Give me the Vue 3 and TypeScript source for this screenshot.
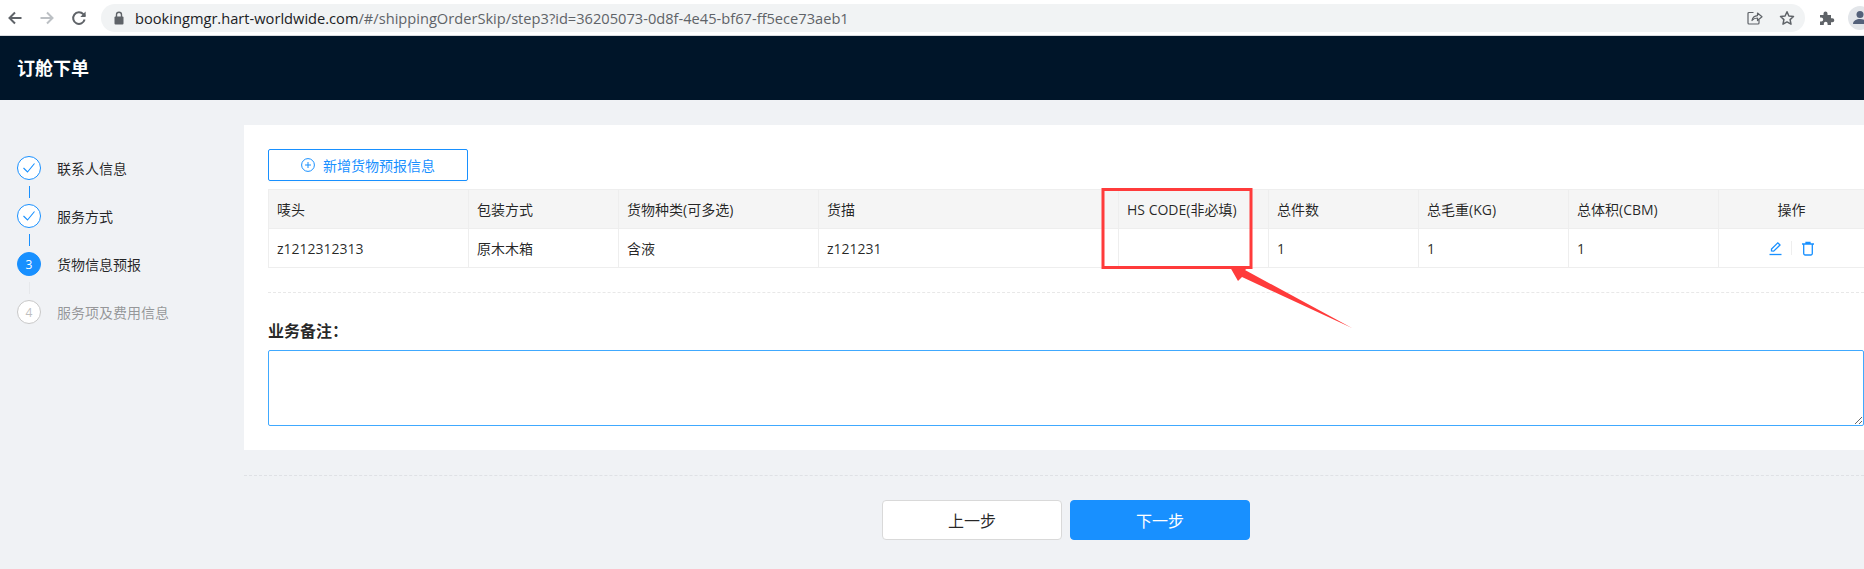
<script setup lang="ts">
interface Step { label: string; state: 'done' | 'active' | 'todo'; num: number }
const steps: Step[] = [
  { label: '联系人信息', state: 'done', num: 1 },
  { label: '服务方式', state: 'done', num: 2 },
  { label: '货物信息预报', state: 'active', num: 3 },
  { label: '服务项及费用信息', state: 'todo', num: 4 },
]
const columns: { title: string; width: number }[] = [
  { title: '唛头', width: 200 },
  { title: '包装方式', width: 150 },
  { title: '货物种类(可多选)', width: 200 },
  { title: '货描', width: 300 },
  { title: 'HS CODE(非必填)', width: 150 },
  { title: '总件数', width: 150 },
  { title: '总毛重(KG)', width: 150 },
  { title: '总体积(CBM)', width: 150 },
  { title: '操作', width: 146 },
]
const row = ['z1212312313', '原木木箱', '含液', 'z121231', '', '1', '1', '1']
</script>

<template>
  <div class="page">
    <div class="chrome">
      <svg class="nav" width="16" height="16" viewBox="0 0 16 16"><path d="M14.5 8H2.500M8 2.500L2.500 8L8 13.500" fill="none" stroke="#5f6368" stroke-width="2"/></svg>
      <svg class="nav" width="16" height="16" viewBox="0 0 16 16"><path d="M1.500 8H13.500M8 2.500L13.500 8L8 13.500" fill="none" stroke="#bcc0c4" stroke-width="2"/></svg>
      <svg class="nav" width="16" height="16" viewBox="0 0 16 16"><path d="M13.600 9.500A5.800 5.800 0 1 1 12.300 4.200L14 6" fill="none" stroke="#5f6368" stroke-width="2"/><path d="M14.600 1.600V6.900H9.300Z" fill="#5f6368"/></svg>
      <div class="omnibox">
        <svg class="lock" width="12" height="14" viewBox="0 0 12 14"><rect x="1.500" y="5.500" width="9" height="8" rx="1" fill="#5f6368"/><path d="M3.500 6V3.800a2.500 2.500 0 0 1 5 0V6" fill="none" stroke="#5f6368" stroke-width="1.400"/></svg>
        <span class="url"><b>bookingmgr.hart-worldwide.com</b>/#/shippingOrderSkip/step3?id=36205073-0d8f-4e45-bf67-ff5ece73aeb1</span>
        <svg class="share" width="16" height="16" viewBox="0 0 16 16"><path d="M6.500 2.500H2a1 1 0 0 0-1 1V13a1 1 0 0 0 1 1h9a1 1 0 0 0 1-1V10" fill="none" stroke="#5f6368" stroke-width="1.200"/><path d="M5 10.500C5.500 7.500 7.500 5.800 10.500 5.600V3L15 6.800L10.500 10.500V8C8 8 6.300 8.800 5 10.500Z" fill="none" stroke="#5f6368" stroke-width="1.200" stroke-linejoin="round"/></svg>
        <svg class="star" width="16" height="16" viewBox="0 0 16 16"><path d="M8 1.800L9.900 6L14.500 6.500L11.100 9.600L12 14.200L8 11.900L4 14.200L4.900 9.600L1.500 6.500L6.100 6Z" fill="none" stroke="#5f6368" stroke-width="1.500" stroke-linejoin="round"/></svg>
      </div>
      <svg class="puzzle" width="16" height="16" viewBox="0 0 16 16"><path d="M1 5H4.500V3.500a2 2 0 0 1 4 0V5H12V8.300h1.300a2 2 0 0 1 0 4H12V15H8.600V13.700a1.900 1.900 0 0 0-3.800 0V15H1V11.500H2.200a2 2 0 0 0 0-4H1Z" fill="#5f6368"/></svg>
      <div class="avatar">
        <svg width="20" height="20" viewBox="0 0 20 20"><circle cx="10" cy="6.500" r="3.500" fill="#54617a"/><path d="M3 16c0-3.500 3.500-5 7-5s7 1.500 7 5Z" fill="#54617a"/></svg>
      </div>
    </div>

    <header class="topbar">订舱下单</header>

    <div class="main">
      <nav class="steps">
        <template v-for="(s, i) in steps" :key="s.num">
          <div class="step" :class="s.state">
            <span class="dot">
              <svg v-if="s.state === 'done'" width="14" height="12" viewBox="0 0 14 12"><path d="M1.500 6L5.500 10L12.500 1.500" fill="none" stroke="#1890ff" stroke-width="1.100"/></svg>
              <template v-else>{{ s.num }}</template>
            </span>
            <span class="step-label">{{ s.label }}</span>
          </div>
          <div v-if="i < steps.length - 1" class="connector" :class="{ muted: s.state === 'active' }"><i></i></div>
        </template>
      </nav>

      <div class="content">
        <section class="card">
          <button class="add-btn" type="button">
            <svg width="14" height="14" viewBox="0 0 14 14"><circle cx="7" cy="7" r="6.400" fill="none" stroke="#1890ff" stroke-width="1"/><path d="M7 4V10M4 7H10" stroke="#1890ff" stroke-width="1"/></svg>
            <span>新增货物预报信息</span>
          </button>
          <table class="grid">
            <colgroup><col v-for="c in columns" :key="c.title" :style="{ width: c.width + 'px' }" /></colgroup>
            <thead>
              <tr><th v-for="(c, i) in columns" :key="c.title" :class="{ center: i === 8 }">{{ c.title }}</th></tr>
            </thead>
            <tbody>
              <tr>
                <td v-for="(v, i) in row" :key="i">{{ v }}</td>
                <td class="ops">
                  <svg width="15" height="15" viewBox="0 0 15 15"><path d="M3.500 10L3.500 8L9.800 1.800L12 4L5.700 10.200Z" fill="none" stroke="#1890ff" stroke-width="1.300"/><path d="M1.500 13.500H13.500" stroke="#1890ff" stroke-width="1.300"/></svg>
                  <i class="sep"></i>
                  <svg width="14" height="15" viewBox="0 0 14 15"><path d="M1 3H13M5 3V1.500H9V3M2.700 3V12.500A1.500 1.500 0 0 0 4.200 14H9.800A1.500 1.500 0 0 0 11.300 12.500V3" fill="none" stroke="#1890ff" stroke-width="1.300"/></svg>
                </td>
              </tr>
            </tbody>
          </table>
          <div class="dash"></div>
          <div class="remark-title">业务备注：</div>
          <textarea class="remark"></textarea>
        </section>
        <div class="bottom-dash"></div>
        <div class="actions">
          <button class="btn prev" type="button">上一步</button>
          <button class="btn next" type="button">下一步</button>
        </div>
      </div>
    </div>

    <svg class="annotation" width="1864" height="569" viewBox="0 0 1864 569">
      <polygon points="1230,267 1249,267 1245,270 1352,328 1242,277 1238,281" fill="#ff3b3b"/>
      <rect x="1103" y="189.500" width="148" height="78" fill="none" stroke="#ff3b3b" stroke-width="3"/>
    </svg>
  </div>
</template>

<style>
html, body { margin: 0; background: #f0f2f5; }
</style>

<style scoped>
.page {
  position: relative;
  width: 1864px;
  height: 569px;
  overflow: hidden;
  background: #f0f2f5;
  font-family: "Open Sans", "Noto Sans CJK SC", sans-serif;
  font-size: 14px;
  color: rgba(0, 0, 0, 0.85);
}
.chrome {
  display: flex;
  align-items: center;
  height: 35px;
  box-sizing: content-box;
  background: #fff;
  border-bottom: 1px solid #dadce0;
  padding-left: 7px;
}
.nav { flex: none; margin-right: 16px; }
.omnibox {
  flex: none;
  display: flex;
  align-items: center;
  width: 1704px;
  height: 28px;
  margin-left: -2px;
  border-radius: 14px;
  background: #f1f3f4;
  box-sizing: border-box;
  padding-left: 12px;
}
.lock { flex: none; }
.url {
  margin-left: 10px;
  font-family: "Open Sans", sans-serif;
  font-size: 14.650px;
  color: #5f6368;
  white-space: nowrap;
}
.url b { font-weight: 400; color: #202124; }
.share { margin-left: auto; }
.star { margin-left: 16px; margin-right: 10px; }
.puzzle { flex: none; margin-left: 14px; }
.avatar {
  flex: none;
  width: 24px;
  height: 24px;
  margin-left: 13px;
  border-radius: 50%;
  background: #e3e6ea;
  display: flex;
  align-items: center;
  justify-content: center;
}
.topbar {
  height: 64px;
  line-height: 64px;
  padding-left: 17px;
  background: #001529;
  color: #fff;
  font-size: 18px;
  font-weight: 700;
}
.main { display: flex; }
.steps {
  flex: none;
  width: 244px;
  box-sizing: border-box;
  padding: 56px 0 0 17px;
}
.step { display: flex; align-items: center; gap: 16px; height: 24px; }
.dot {
  flex: none;
  width: 24px;
  height: 24px;
  box-sizing: border-box;
  border: 1px solid #1890ff;
  border-radius: 50%;
  display: flex;
  align-items: center;
  justify-content: center;
  background: #fff;
  font-size: 12px;
}
.step.active .dot { background: #1890ff; color: #fff; }
.step.todo .dot { border-color: #c8c8c8; color: #bfbfbf; }
.step.todo .step-label { color: rgba(0, 0, 0, 0.4); }
.connector { height: 24px; padding: 6px 0; box-sizing: border-box; width: 24px; display: flex; justify-content: center; }
.connector i { width: 1px; background: #1890ff; }
.connector.muted i { background: #e6e8eb; }
.content { flex: 1; min-width: 0; padding-top: 25px; }
.card {
  background: #fff;
  padding: 24px 0 24px 24px;
}
.add-btn {
  display: flex;
  align-items: center;
  justify-content: center;
  gap: 8px;
  width: 200px;
  height: 32px;
  box-sizing: border-box;
  padding: 0;
  border: 1px solid #1890ff;
  border-radius: 2px;
  background: #fff;
  color: #1890ff;
  font: inherit;
  box-shadow: 0 2px 0 rgba(0, 0, 0, 0.015);
}
.grid {
  width: 1596px;
  margin-top: 8px;
  table-layout: fixed;
  border-collapse: separate;
  border-spacing: 0;
  border-top: 1px solid #eeeeee;
  border-left: 1px solid #eeeeee;
}
.grid th, .grid td {
  box-sizing: border-box;
  padding: 0 8px;
  border-right: 1px solid #eeeeee;
  border-bottom: 1px solid #eeeeee;
  text-align: left;
  white-space: nowrap;
}
.grid th { height: 39px; background: #f5f5f5; font-weight: 400; }
.grid th.center { text-align: center; }
.grid td { height: 39px; }
.grid td.ops { text-align: center; font-size: 0; }
.ops svg { vertical-align: middle; }
.sep {
  display: inline-block;
  width: 1px;
  height: 14px;
  margin: 0 9px 0 8px;
  background: #eeeeee;
  vertical-align: middle;
}
.dash { margin-top: 24px; border-top: 1px dashed #e8e8e8; }
.remark-title {
  margin-top: 26px;
  height: 24px;
  line-height: 24px;
  font-size: 16px;
  font-weight: 700;
}
.remark {
  display: block;
  width: 100%;
  height: 76px;
  margin-top: 7px;
  box-sizing: border-box;
  border: 1px solid #40a9ff;
  border-radius: 2px;
  outline: none;
  background: #fff;
  resize: vertical;
}
.bottom-dash { margin-top: 25px; border-top: 1px dashed #dfe1e5; }
.actions {
  display: flex;
  justify-content: center;
  gap: 8px;
  padding: 24px 0 0 24px;
}
.btn {
  width: 180px;
  height: 40px;
  box-sizing: border-box;
  border-radius: 4px;
  font: inherit;
  font-size: 16px;
  padding: 0;
}
.prev { background: #fff; border: 1px solid #d9d9d9; color: rgba(0, 0, 0, 0.85); }
.next { background: #1890ff; border: 1px solid #1890ff; color: #fff; }
.annotation { position: absolute; top: 0; left: 0; pointer-events: none; }
</style>
